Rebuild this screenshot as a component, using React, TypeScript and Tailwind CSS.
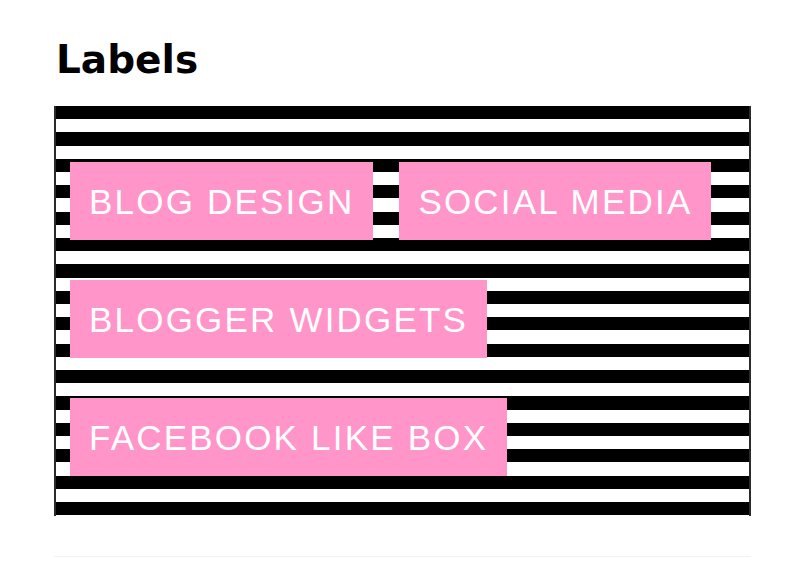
import React from 'react';

const labels = ['BLOG DESIGN', 'SOCIAL MEDIA', 'BLOGGER WIDGETS', 'FACEBOOK LIKE BOX'];

export default function App() {
  return (
    <div className="min-h-screen bg-white pl-[54px] pt-[40px]">
      <h2 className="ml-[2px] font-['DejaVu_Sans',sans-serif] text-[39px] font-bold leading-[39px] text-black">
        Labels
      </h2>

      {/* striped label cloud */}
      <div className="mt-[27px] w-[697px] border-x-2 border-[#2a2a2a] bg-[repeating-linear-gradient(to_bottom,#000_0px,#000_13.2px,#fff_13.2px,#fff_26.4px)] pb-[40px] pl-[14px] pt-[56px]">
        <div className="flex flex-wrap gap-x-[26px] gap-y-[40px]">
          {labels.map((label) => (
            <a
              key={label}
              href="#"
              className="flex h-[78px] items-center bg-[#ff95c9] px-[19px] font-['Liberation_Sans',Arial,sans-serif] text-[35px] leading-none tracking-[2.2px] text-white"
            >
              {label}
            </a>
          ))}
        </div>
      </div>

      <div className="mt-[40px] h-px w-[697px] bg-[#f2f2f2]" />
    </div>
  );
}
